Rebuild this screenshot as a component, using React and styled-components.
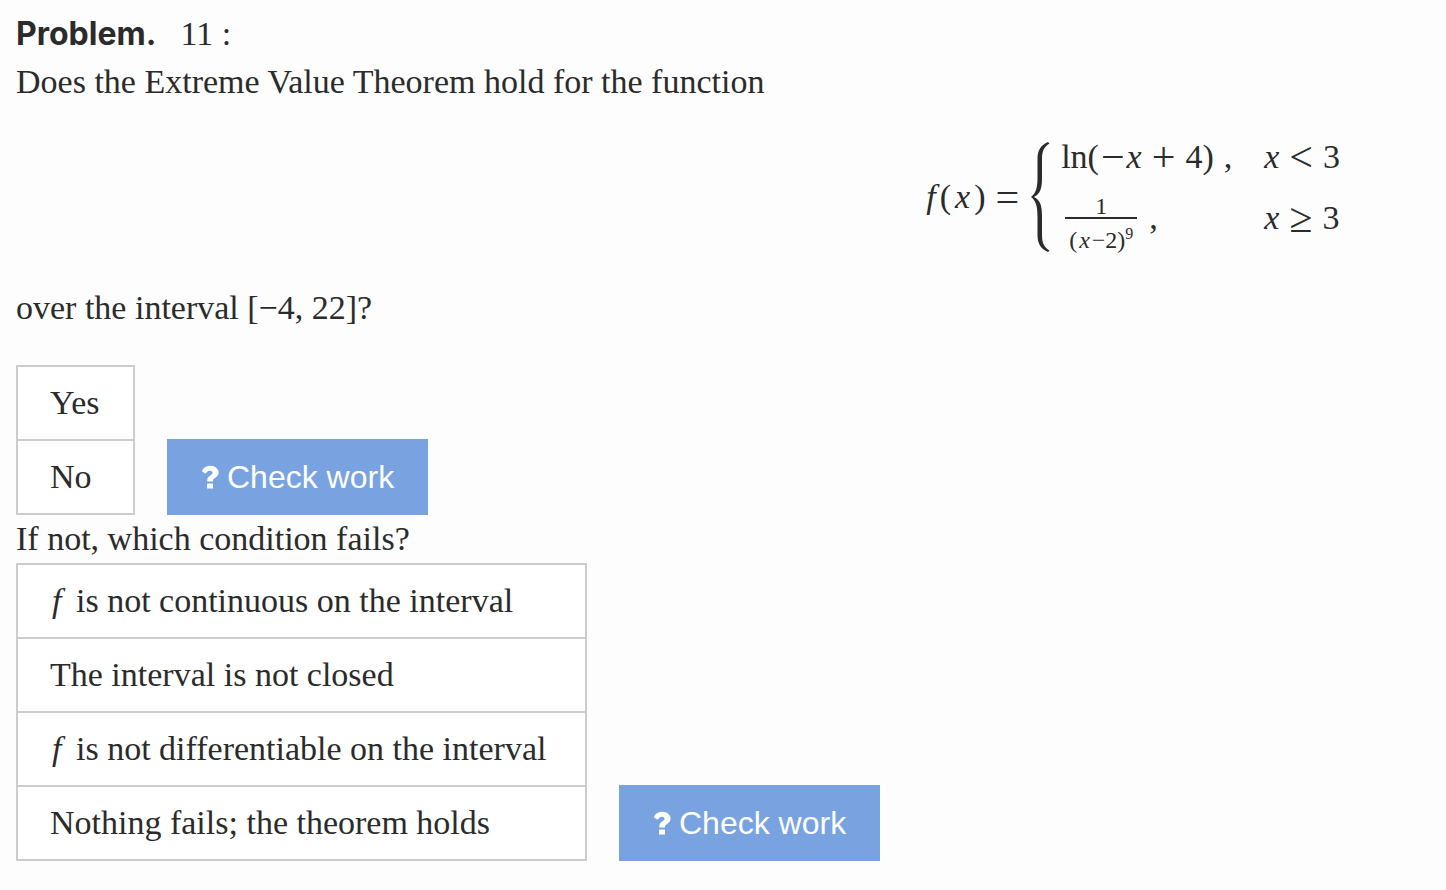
import React, { useState } from 'react';
import styled, { createGlobalStyle } from 'styled-components';

const GlobalStyle = createGlobalStyle`
  body {
    margin: 0;
    background: #fdfdfd;
    color: #2b2b2b;
    font-family: 'Liberation Serif', serif;
    font-size: 34px;
    line-height: 48px;
  }
`;

const Page = styled.main`
  padding: 10px 16px 28px;
`;

const Heading = styled.h1`
  display: flex;
  align-items: baseline;
  gap: 24px;
  margin: 0;
  font-size: 34px;
  font-weight: 400;
`;

const Label = styled.span`
  font-family: Inter, sans-serif;
  font-size: 32px;
  font-weight: 700;
`;

const Text = styled.p`
  margin: 0;
`;

const Variable = styled.i`
  margin: 0 2px;
`;

const FunctionName = styled.i`
  margin: 0 6px 0 2px;
`;

const Equation = styled.div`
  display: flex;
  justify-content: flex-end;
  align-items: center;
  gap: 12px;
  padding: 30px 90px 26px 0;
`;

const Tokens = styled.span`
  display: inline-flex;
  align-items: center;
  gap: ${props => props.$gap || 2}px;
`;

const Operator = styled.span`
  font-size: 42px;
  line-height: 40px;
`;

const Brace = styled.svg`
  width: 20px;
  height: 112px;
  fill: #2b2b2b;
`;

const Cases = styled.div`
  display: grid;
  grid-template-columns: auto auto;
  grid-template-rows: 42px 80px;
  column-gap: 32px;
  align-items: center;
`;

const Fraction = styled.span`
  display: inline-grid;
  grid-template-rows: 38px 40px;
  row-gap: 2px;
  padding: 0 4px;
  margin: 0 10px 0 4px;
  justify-items: center;
  font-size: 24px;
  background: linear-gradient(#2b2b2b, #2b2b2b) center / 100% 2px no-repeat;
`;

const Numerator = styled.span`
  align-self: end;
  line-height: 20px;
`;

const Denominator = styled.span`
  line-height: 44px;
`;

const Power = styled.sup`
  font-size: 16px;
  line-height: 0;
`;

const Answer = styled.div`
  display: flex;
  align-items: flex-end;
  gap: 32px;
  margin-top: ${props => (props.$spaced ? '33px' : 0)};
`;

const Choices = styled.div`
  display: flex;
  flex-direction: column;
  box-sizing: border-box;
  min-width: ${props => (props.$wide ? '571px' : '119px')};
  border: 2px solid #ccc;
  background: #fff;
`;

const Choice = styled.button`
  padding: 12px 32px;
  border: 0;
  background: ${props => (props.$selected ? '#eaf1fb' : '#fff')};
  color: inherit;
  font: inherit;
  text-align: left;
  white-space: nowrap;
  cursor: pointer;

  & + & {
    border-top: 2px solid #ccc;
  }
`;

const CheckButton = styled.button`
  display: flex;
  align-items: center;
  gap: 8px;
  padding: 14px 34px;
  border: 0;
  background: #78a3e0;
  color: #fff;
  font-family: 'Liberation Sans', sans-serif;
  font-size: 32px;
  line-height: 48px;
  white-space: nowrap;
  cursor: pointer;
`;

const QuestionIcon = styled.svg`
  width: 18px;
  height: 24px;
  fill: currentColor;
`;

const holdsOptions = ['Yes', 'No'];

const conditionOptions = [
  <><FunctionName>f</FunctionName> is not continuous on the interval</>,
  'The interval is not closed',
  <><FunctionName>f</FunctionName> is not differentiable on the interval</>,
  'Nothing fails; the theorem holds',
];

function MultipleChoice({ label, options, spaced, wide }) {
  const [selected, setSelected] = useState(null);

  return (
    <Answer $spaced={spaced}>
      <Choices role="group" aria-label={label} $wide={wide}>
        {options.map((option, index) => (
          <Choice
            key={index}
            type="button"
            aria-pressed={selected === index}
            $selected={selected === index}
            onClick={() => setSelected(index)}
          >
            {option}
          </Choice>
        ))}
      </Choices>
      <CheckButton type="button">
        <QuestionIcon viewBox="0 0 18 24" aria-hidden="true">
          <path d="M6.6 18.5 H11.4 Q12 18.5 12 19.1 V23 Q12 23.6 11.4 23.6 H6.6 Q6 23.6 6 23 V19.1 Q6 18.5 6.6 18.5 Z" />
          <path d="M1 5.6 C3 2.2 5.6 0.8 9.4 0.8 C13.8 0.8 17.6 3.6 17.6 7.6 C17.6 10 16.4 11.5 14 12.9 C12.4 13.9 12 14.4 12 15.4 V16 Q12 16.6 11.4 16.6 H6.8 Q6.2 16.6 6.2 16 V15 C6.2 12.6 7.6 11.3 9.6 10.2 C11 9.4 11.6 8.9 11.6 7.8 C11.6 6.6 10.4 5.8 9 5.8 C7.2 5.8 6.4 6.6 5 8.3 Q4.6 8.7 4.1 8.4 L1.2 6.4 Q0.8 6.1 1 5.6 Z" />
        </QuestionIcon>
        Check work
      </CheckButton>
    </Answer>
  );
}

function PiecewiseFunction() {
  return (
    <Equation>
      <Tokens $gap={10}>
        <Tokens $gap={4}><i>f</i><span>(</span><i>x</i><span>)</span></Tokens>
        <Operator>=</Operator>
      </Tokens>
      <Tokens $gap={10}>
        <Brace viewBox="0 0 20 112" aria-hidden="true">
          <path d="M17 1 C10 4 6.5 9 6.5 18 V36 C6.5 47 5 52 0 56 C5 60 6.5 65 6.5 76 V94 C6.5 103 10 108 17 111 L18.5 109.5 C13 106 11 102 11 94 V75 C11 64 9 59 3 56 C9 53 11 48 11 37 V18 C11 10 13 6 18.5 2.5 Z" />
        </Brace>
        <Cases>
          <Tokens $gap={10}>
            <Tokens><span>ln(</span><Operator>−</Operator><i>x</i></Tokens>
            <Operator>+</Operator>
            <span>4)</span>
            <span>,</span>
          </Tokens>
          <Tokens $gap={10}><i>x</i><Operator>&lt;</Operator><span>3</span></Tokens>
          <Tokens>
            <Fraction>
              <Numerator>1</Numerator>
              <Denominator>(<Variable>x</Variable>−2)<Power>9</Power></Denominator>
            </Fraction>
            <span>,</span>
          </Tokens>
          <Tokens $gap={10}><i>x</i><Operator>≥</Operator><span>3</span></Tokens>
        </Cases>
      </Tokens>
    </Equation>
  );
}

function App() {
  return (
    <>
      <GlobalStyle />
      <Page>
        <Heading>
          <Label>Problem.</Label>
          <span>11 :</span>
        </Heading>
        <Text>Does the Extreme Value Theorem hold for the function</Text>
        <PiecewiseFunction />
        <Text>over the interval [−4, 22]?</Text>
        <MultipleChoice label="Does the theorem hold?" options={holdsOptions} spaced />
        <Text>If not, which condition fails?</Text>
        <MultipleChoice label="Which condition fails?" options={conditionOptions} wide />
      </Page>
    </>
  );
}

export default App;
